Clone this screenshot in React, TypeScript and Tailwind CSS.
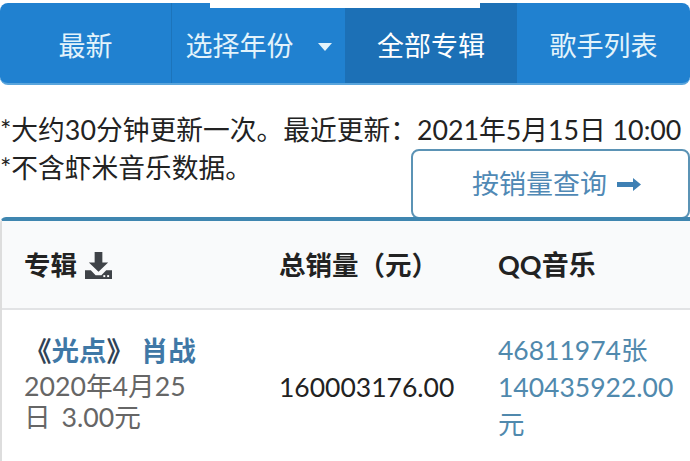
const cjk = "font-['Lato','Noto_Sans_CJK_SC',sans-serif]";

function DownloadIcon() {
  return (
    <svg width="27" height="27" viewBox="0 0 28 28" className="text-[#3f4348]">
      <path d="M10 0h8v11h6L14 20.500 4 11h6z" fill="currentColor" />
      <path d="M0 19h6l5 5h6l5-5h6v9H0z" fill="currentColor" />
      <rect x="19" y="24" width="2" height="2" fill="#fff" />
      <rect x="23" y="24" width="2" height="2" fill="#fff" />
    </svg>
  );
}

export default function App() {
  return (
    <div className={`${cjk} flex h-[461px] w-[690px] flex-col overflow-hidden bg-white pt-[3px] text-[#222]`}>
      <nav className="relative flex h-[82px] shrink-0 rounded-[8px] border-b-2 border-[#5aa5dc] bg-[#2081d0] text-[27px] text-[#e3f3fb]">
        {/* white notch along the top edge */}
        <div className="absolute left-[210px] top-0 h-[5px] w-[270px] bg-white" />
        <a className="flex w-[172px] items-center justify-center border-r border-[#1c74bb] pt-[7px]">最新</a>
        <a className="flex w-[173px] items-center justify-center gap-[24px] pt-[7px]">
          选择年份
          <span className="h-0 w-0 border-x-[7px] border-t-[8px] border-x-transparent border-t-[#e3f3fb]" />
        </a>
        <a className="flex w-[172px] items-center justify-center bg-[#1c70b6] pt-[7px] text-white">全部专辑</a>
        <a className="flex w-[173px] items-center justify-center pt-[7px]">歌手列表</a>
      </nav>

      <div className="mt-[26px] text-[26.75px] leading-[38px]">
        <p className="whitespace-nowrap">*大约30分钟更新一次。最近更新：2021年5月15日 10:00</p>
        <p className="whitespace-nowrap">*不含虾米音乐数据。</p>
      </div>

      <div className="-mt-[38px] flex justify-end">
        <button className="flex h-[70px] w-[279px] items-center justify-center gap-[10px] rounded-[8px] border-2 border-[#5b93b5] bg-white pl-[12px] text-[27px] text-[#5089b5]">
          按销量查询
          <svg width="24" height="13" viewBox="0 0 24 13" className="text-[#3e80b4]">
            <path d="M0 4h16V0l8 6.500-8 6.500V9H0z" fill="currentColor" />
          </svg>
        </button>
      </div>

      <div className="-mt-[2px] flex-1 rounded-tl-[6px] border-t-4 border-l-2 border-[#3f86b0] border-l-[#ddd]">
        <div className="grid h-[89px] grid-cols-[277px_219px_1fr] items-center border-b-2 border-[#e2e3e5] bg-[#f9fafb] pt-[2px] text-[26.5px] font-bold">
          <div className="flex items-center gap-[8px] pl-[22px]">
            专辑
            <DownloadIcon />
          </div>
          <div>总销量（元）</div>
          <div className="text-[27px]">QQ音乐</div>
        </div>
        <div className="grid grid-cols-[277px_219px_1fr] items-center pt-[22px] text-[26.5px] leading-[37px]">
          <div className="self-start pl-[22px]">
            <div className="text-[27.5px] font-bold text-[#3f78a6]">
              <span className="text-[#2f4356]">《</span>光点<span className="text-[#2f4356]">》</span> 肖战
            </div>
            <div className="mt-[2px] text-[26.7px] leading-[31px] text-[#666]">
              2020年4月25<br />日 <span className="ml-[4px]">3.00元</span>
            </div>
          </div>
          <div>160003176.00</div>
          <div className="text-[#5089ad]">46811974张<br />140435922.00<br />元</div>
        </div>
      </div>
    </div>
  );
}
